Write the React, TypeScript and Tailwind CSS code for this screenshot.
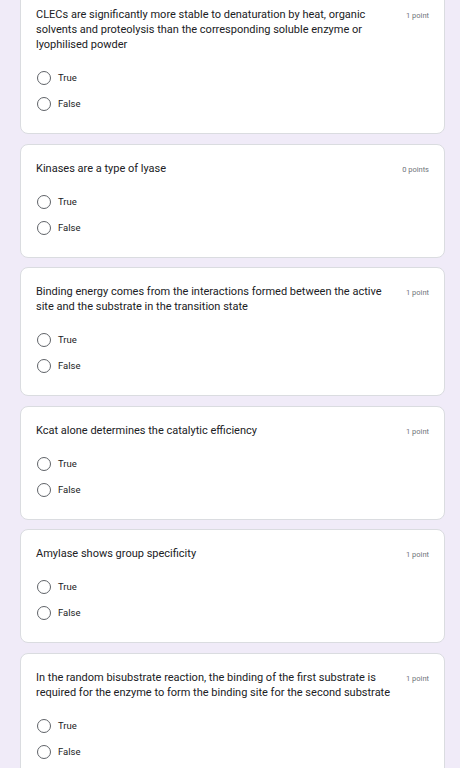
import React from "react";

type Q = { text: string; points: string };

const questions: Q[] = [
  {
    text: "CLECs are significantly more stable to denaturation by heat, organic solvents and proteolysis than the corresponding soluble enzyme or lyophilised powder",
    points: "1 point",
  },
  { text: "Kinases are a type of lyase", points: "0 points" },
  {
    text: "Binding energy comes from the interactions formed between the active site and the substrate in the transition state",
    points: "1 point",
  },
  { text: "Kcat alone determines the catalytic efficiency", points: "1 point" },
  { text: "Amylase shows group specificity", points: "1 point" },
  {
    text: "In the random bisubstrate reaction, the binding of the first substrate is required for the enzyme to form the binding site for the second substrate",
    points: "1 point",
  },
];

function Radio({ label }: { label: string }) {
  return (
    <div className="flex h-[26px] items-center">
      <div className="ml-[0.5px] h-[14px] w-[14px] rounded-full border-[1.5px] border-[#5f6368]" />
      <span className="ml-[7.5px] text-[9.5px] leading-none text-[#202124]">{label}</span>
    </div>
  );
}

function Card({ q }: { q: Q }) {
  return (
    <div className="rounded-[8px] border border-[#dadce0] bg-white pl-[15px] pr-[15px] pb-[16px] pt-[16px]">
      <div className="flex items-start">
        <div className="w-[358px] text-[11px] leading-[15px] text-[#202124]">{q.text}</div>
        <div className="h-[15px] flex-1 whitespace-nowrap text-right text-[7.5px] leading-[17px] text-[#70757a]">
          {q.points}
        </div>
      </div>
      <div className="mt-[13px]">
        <Radio label="True" />
        <Radio label="False" />
      </div>
    </div>
  );
}

export default function App() {
  return (
    <div
      className="min-h-[768px] overflow-hidden bg-[#f0ebf8] pl-[20px] pr-[15px]"
      style={{ fontFamily: "Roboto, 'Noto Sans', sans-serif" }}
    >
      <div className="-mt-[10px] flex flex-col gap-[9.5px]">
        {questions.map((q, i) => (
          <Card key={i} q={q} />
        ))}
      </div>
    </div>
  );
}
